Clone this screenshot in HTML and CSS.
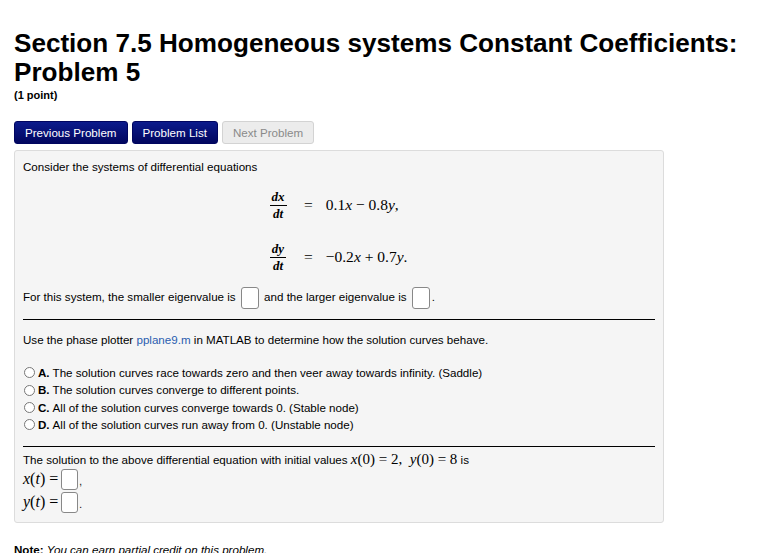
FILE: index.html
```html
<!DOCTYPE html>
<html>
<head>
<meta charset="utf-8">
<link rel="stylesheet" href="styles.css">
</head>
<body>
<h1 class="title">Section 7.5 Homogeneous systems Constant Coefficients: Problem 5</h1>
<div class="points">(1 point)</div>
<div class="nav">
  <span class="btn btn-primary">Previous Problem</span>
  <span class="btn btn-primary">Problem List</span>
  <span class="btn btn-disabled">Next Problem</span>
</div>
<div class="problem">
  <p class="line">Consider the systems of differential equations</p>
  <div class="eqs">
    <div class="eq">
      <span class="frac"><span class="num">dx</span><span class="den">dt</span></span>
      <span class="eqsign">=</span>
      <span class="rhs">0.1<i>x</i> − 0.8<i>y</i>,</span>
    </div>
    <div class="eq">
      <span class="frac"><span class="num">dy</span><span class="den">dt</span></span>
      <span class="eqsign">=</span>
      <span class="rhs">−0.2<i>x</i> + 0.7<i>y</i>.</span>
    </div>
  </div>
  <p class="line eig">For this system, the smaller eigenvalue is <span class="box"></span> and the larger eigenvalue is <span class="box"></span>.</p>
  <hr class="rule">
  <p class="line">Use the phase plotter <span class="link">pplane9.m</span> in MATLAB to determine how the solution curves behave.</p>
  <div class="options">
    <label class="opt"><span class="radio"></span><b>A.</b> The solution curves race towards zero and then veer away towards infinity. (Saddle)</label>
    <label class="opt"><span class="radio"></span><b>B.</b> The solution curves converge to different points.</label>
    <label class="opt"><span class="radio"></span><b>C.</b> All of the solution curves converge towards 0. (Stable node)</label>
    <label class="opt"><span class="radio"></span><b>D.</b> All of the solution curves run away from 0. (Unstable node)</label>
  </div>
  <hr class="rule rule2">
  <p class="line sol">The solution to the above differential equation with initial values <span class="m"><i>x</i>(0) = 2, &nbsp;<i>y</i>(0) = 8</span> is</p>
  <div class="ans"><span class="m am"><i>x</i>(<i>t</i>) =</span><span class="box"></span><span class="punct">,</span></div>
  <div class="ans"><span class="m am"><i>y</i>(<i>t</i>) =</span><span class="box"></span><span class="punct">.</span></div>
</div>
<p class="note"><b>Note:</b> <i>You can earn partial credit on this problem.</i></p>
</body>
</html>
```
FILE: styles.css
```css
body {
  margin: 0;
  padding: 0 14px;
  font-family: "Liberation Sans", Arial, sans-serif;
  font-size: 11.6px;
  color: #000;
  background: #fff;
}
.title {
  margin: 0;
  padding-top: 29px;
  font-size: 26.1px;
  line-height: 29px;
  font-weight: bold;
}
.points {
  font-size: 11px;
  font-weight: bold;
  line-height: 14px;
  margin-top: 1px;
}
.nav {
  display: flex;
  gap: 4px;
  margin-top: 19px;
  height: 22px;
}
.btn {
  display: flex;
  align-items: center;
  padding: 0 10px 0 10px;
  border-radius: 3px;
  font-size: 11.6px;
  height: 23px;
  box-sizing: border-box;
}
.btn-primary {
  background: linear-gradient(#0c1b8c, #01065f);
  color: #fff;
  border: 1px solid #000560;
}
.btn-disabled {
  background: #ececec;
  color: #8a8a8a;
  border: 1px solid #d3d3d3;
}
.problem {
  margin-top: 7px;
  width: 650px;
  box-sizing: border-box;
  background: #f5f5f5;
  border: 1px solid #dcdcdc;
  border-radius: 3px;
  padding: 8px 8px 8px 8px;
}
.line {
  margin: 0;
  line-height: 16px;
}
.eqs {
  margin: 12px 0 11px 0;
  padding-left: 245px;
}
.eq {
  display: flex;
  align-items: center;
  height: 36px;
  margin-bottom: 16px;
  font-family: "Liberation Serif", "Times New Roman", serif;
  font-size: 15.5px;
}
.eq:last-child { margin-bottom: 0; }
.frac {
  display: inline-flex;
  flex-direction: column;
  align-items: center;
  width: 20px;
  font-style: italic;
  font-weight: bold;
  font-size: 13px;
}
.num {
  border-bottom: 1px solid #000;
  padding: 0 2px 1px;
  line-height: 14px;
}
.den {
  line-height: 15px;
}
.eqsign {
  margin: 0 13px 0 16px;
}
.box {
  display: inline-block;
  width: 18px;
  height: 22px;
  background: #fff;
  border: 1px solid #888;
  border-radius: 3px;
  vertical-align: middle;
  margin: 0 2px;
  box-sizing: border-box;
}
.eig { line-height: 22px; }
.rule {
  border: 0;
  border-top: 1px solid #000;
  margin: 10px 0 12px 0;
}
.link { color: #2a5db0; }
.options {
  margin-top: 17px;
  display: flex;
  flex-direction: column;
  gap: 1.3px;
}
.opt {
  display: flex;
  align-items: center;
  line-height: 16px;
}
.opt b { margin-right: 3px; }
.radio {
  width: 9px;
  height: 9px;
  border: 1px solid #777;
  border-radius: 50%;
  background: #fff;
  margin: 0 3px 0 1px;
}
.rule2 { margin: 13px 0 4px 0; }
.m {
  font-family: "Liberation Serif", "Times New Roman", serif;
  font-size: 15px;
}
.am { font-size: 16px; }
.ans {
  display: flex;
  align-items: center;
  height: 23px;
}
.ans .box { margin: 0 1px 0 3px; height: 21px; width: 17px; }
.punct { font-size: 10px; align-self: flex-end; margin-bottom: 4px; }
.note {
  margin: 20px 0 0 0;
  font-size: 11.6px;
}
```
